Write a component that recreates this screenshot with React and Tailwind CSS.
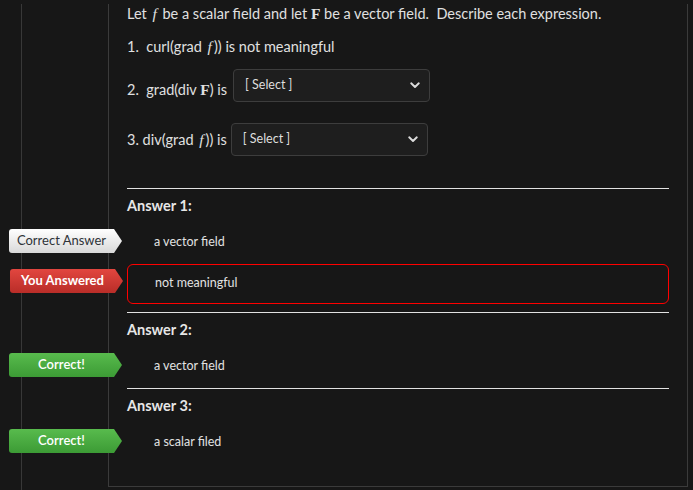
import React from "react";

const mathI = { fontFamily: '"Liberation Serif", "DejaVu Serif", serif' };

function F() {
  return (
    <span className="font-bold text-[15.5px]" style={mathI}>
      F
    </span>
  );
}
function Fi() {
  return (
    <span className="italic text-[15.5px] px-[2px]" style={mathI}>
      f
    </span>
  );
}

function Chevron() {
  return (
    <svg width="10" height="7" viewBox="0 0 10 7" className="text-[#dcdcdc]">
      <path d="M1.2 1.3 L5 5 L8.8 1.3" fill="none" stroke="currentColor" strokeWidth="1.9" strokeLinecap="round" strokeLinejoin="round" />
    </svg>
  );
}

function Select() {
  return (
    <div className="w-[197px] h-[33px] rounded-[4px] border border-[#3d3d3d] bg-[#1e1e1e] flex items-center justify-between pl-[11px] pr-[9px]">
      <span className="text-[12.5px] text-[#dedede]">[ Select ]</span>
      <Chevron />
    </div>
  );
}

const arrow = "[clip-path:polygon(0_0,calc(100%_-_8px)_0,100%_50%,calc(100%_-_8px)_100%,0_100%)]";

function Badge({ kind, children, left }) {
  const styles = {
    white: "bg-gradient-to-b from-[#ffffff] to-[#d9d9d9] text-[#2e3338] font-normal",
    red: "bg-gradient-to-b from-[#e2463f] to-[#b92d28] text-white font-bold",
    green: "bg-gradient-to-b from-[#58bb4d] to-[#3c9b35] text-white font-semibold",
  };
  return (
    <div
      className={`absolute h-[24px] w-[113px] rounded-l-[3px] flex items-center justify-center pr-[8px] text-[13px] ${arrow} ${styles[kind]}`}
      style={{ left }}
    >
      <span className="-mt-[1px]">{children}</span>
    </div>
  );
}

function Hr() {
  return <div className="h-px bg-[#e2e2e2]" />;
}

function Title({ children }) {
  return <div className="h-[34px] flex items-center font-bold text-[14.5px] text-[#e6e6e6]">{children}</div>;
}

function Row({ children, badge }) {
  return (
    <div className="relative h-[38px] flex items-center pl-[27px] text-[12.5px] text-[#e2e2e2]">
      <div className="absolute top-[6px] left-0 w-0 h-0">{badge}</div>
      <span>{children}</span>
    </div>
  );
}

export default function App() {
  return (
    <div
      className="w-[693px] h-[490px] bg-[#171717] overflow-hidden text-[#e0e0e0]"
      style={{ fontFamily: 'Lato, "Liberation Sans", sans-serif' }}
    >
      <div className="ml-[21px] h-full border-l border-[#383838] pl-[86px]">
        <div className="w-[580px] h-[483px] border-l border-r border-b border-[#3b3b3b] pl-[18px] pr-[18px]">
          <div className="h-[20px] mt-[4px] flex items-center text-[14.5px] whitespace-pre">
            Let <Fi /> be a scalar field and let <F /> be a vector field.{"  "}Describe each expression.
          </div>
          <div className="h-[20px] mt-[13px] flex items-center text-[14.5px] whitespace-pre">
            1.{"  "}curl(grad <Fi />)) is not meaningful
          </div>
          <div className="mt-[12px] flex items-center text-[14.5px] whitespace-pre">
            <span className="mt-[8px]">
              2.{"  "}grad(div <F />) is
            </span>
            <div className="ml-[6px]">
              <Select />
            </div>
          </div>
          <div className="mt-[21px] flex items-center text-[14.5px] whitespace-pre">
            <span>
              3. div(grad <Fi />)) is
            </span>
            <div className="ml-[4px]">
              <Select />
            </div>
          </div>

          <div className="mt-[32px]">
            <Hr />
            <Title>Answer 1:</Title>
            <Row badge={<Badge kind="white" left={-118}>Correct Answer</Badge>}>a vector field</Row>
            <div className="relative mt-[3px] h-[40px] rounded-[6px] border border-[#ff0000] flex items-center pl-[27px] text-[12.5px] text-[#e2e2e2]">
              <div className="absolute top-[4px] left-[-1px] w-0 h-0">
                <Badge kind="red" left={-117}>You Answered</Badge>
              </div>
              <span className="-mt-[2px]">not meaningful</span>
            </div>
            <div className="mt-[8px]">
              <Hr />
            </div>
            <Title>Answer 2:</Title>
            <Row badge={<Badge kind="green" left={-118}>Correct!</Badge>}>a vector field</Row>
            <div className="mt-[3px]">
              <Hr />
            </div>
            <Title>Answer 3:</Title>
            <Row badge={<Badge kind="green" left={-118}>Correct!</Badge>}>a scalar filed</Row>
          </div>
        </div>
      </div>
    </div>
  );
}
